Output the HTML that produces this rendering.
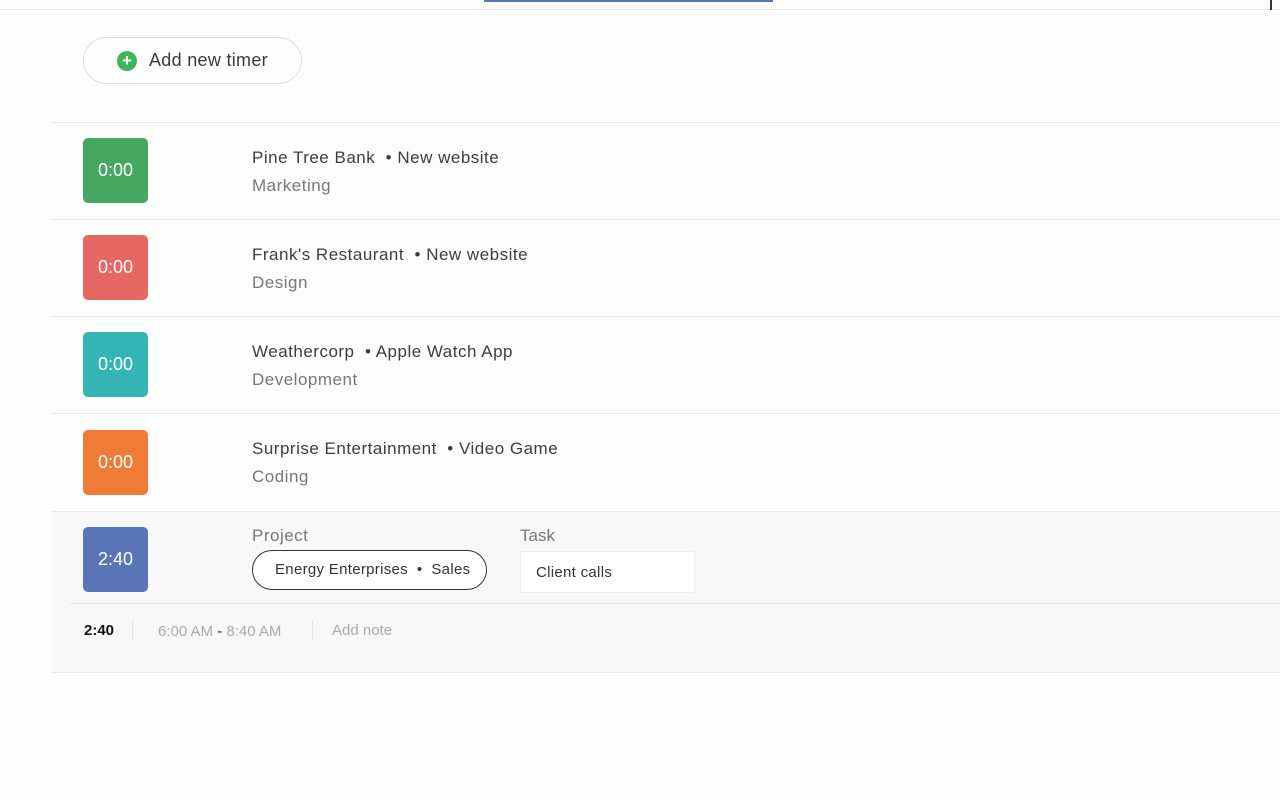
<!DOCTYPE html>
<html><head><meta charset="utf-8"><style>
*{margin:0;padding:0;box-sizing:border-box}
body{width:1280px;height:800px;background:#fefdfe;font-family:"Liberation Sans",sans-serif;position:relative;overflow:hidden;color:#3a3a3a}
.a{position:absolute}
.hl{position:absolute;left:52px;right:0;height:1px;background:#e6e6e6}
.box{position:absolute;left:83px;width:65px;height:65px;border-radius:5px;color:#fff;font-size:18px;display:flex;align-items:center;justify-content:center}
.t1{position:absolute;left:252px;font-size:17px;color:#3d3d3d;letter-spacing:0.5px}
.t2{position:absolute;left:252px;font-size:17px;color:#777;letter-spacing:0.5px}
</style></head><body>
<div class="a" style="left:0;right:0;top:0;height:10px;border-bottom:1px solid #e8e8e8;background:#fdfdfd"></div>
<div class="a" style="left:484px;top:0;width:289px;height:2px;background:#5a79b8"></div>
<div class="a" style="left:1270px;top:0;width:2px;height:10px;background:#333"></div>

<div class="a" style="left:83px;top:37px;width:219px;height:47px;border:1px solid #dcdcdc;border-radius:24px"></div>
<div class="a" style="left:117px;top:51px;width:20px;height:20px;border-radius:50%;background:#3fb55a;color:#fff;font-size:17px;font-weight:bold;line-height:20px;text-align:center">+</div>
<div class="a" style="left:149px;top:50px;font-size:18px;color:#3a3a3a;letter-spacing:0.3px">Add new timer</div>

<div class="hl" style="top:122px"></div>
<div class="box" style="top:138px;background:#45a862">0:00</div>
<div class="t1" style="top:148px">Pine Tree Bank &nbsp;• New website</div>
<div class="t2" style="top:176px">Marketing</div>
<div class="hl" style="top:219px"></div>
<div class="box" style="top:235px;background:#e56862">0:00</div>
<div class="t1" style="top:245px">Frank's Restaurant &nbsp;• New website</div>
<div class="t2" style="top:273px">Design</div>
<div class="hl" style="top:316px"></div>
<div class="box" style="top:332px;background:#35b4b6">0:00</div>
<div class="t1" style="top:342px">Weathercorp &nbsp;• Apple Watch App</div>
<div class="t2" style="top:370px">Development</div>
<div class="hl" style="top:413px"></div>
<div class="box" style="top:430px;background:#ee7b36">0:00</div>
<div class="t1" style="top:439px">Surprise Entertainment &nbsp;• Video Game</div>
<div class="t2" style="top:467px">Coding</div>
<div class="hl" style="top:511px"></div>
<div class="a" style="left:52px;right:0;top:512px;height:160px;background:#f8f8f8"></div>
<div class="box" style="top:527px;background:#5a75b5">2:40</div>
<div class="t2" style="top:526px">Project</div>
<div class="a" style="left:252px;top:550px;width:235px;height:40px;border:1.5px solid #333;border-radius:20px;background:#fff;font-size:15px;color:#333;line-height:38px;padding-left:22px;letter-spacing:0.3px">Energy Enterprises &nbsp;• &nbsp;Sales</div>
<div class="a" style="left:520px;top:526px;font-size:17px;color:#777">Task</div>
<div class="a" style="left:520px;top:551px;width:175px;height:42px;background:#fff;border:1px solid #eee;font-size:15px;color:#333;line-height:42px;padding-left:15px;letter-spacing:0.3px">Client calls</div>
<div class="a" style="left:70px;right:0;top:603px;height:1px;background:#e6e6e6"></div>
<div class="a" style="left:84px;top:622px;font-size:15px;font-weight:bold;color:#111">2:40</div>
<div class="a" style="left:132px;top:620px;width:1px;height:20px;background:#e4e4e4"></div>
<div class="a" style="left:158px;top:623px;font-size:15px;color:#aaa">6:00 AM <span style="color:#333">-</span> 8:40 AM</div>
<div class="a" style="left:312px;top:620px;width:1px;height:20px;background:#e4e4e4"></div>
<div class="a" style="left:332px;top:622px;font-size:15px;color:#aaa">Add note</div>
<div class="hl" style="top:672px"></div>
</body></html>
